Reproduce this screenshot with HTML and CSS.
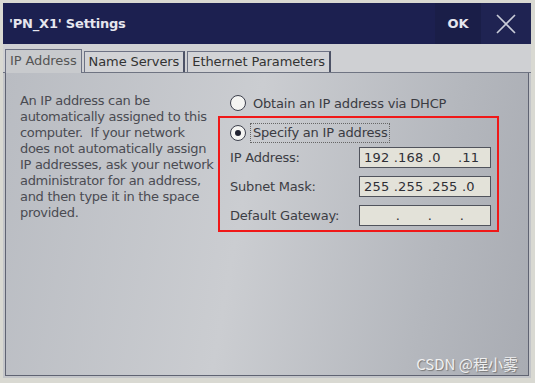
FILE: index.html
```html
<!DOCTYPE html>
<html lang="en">
  <head>
    <meta charset="UTF-8" />
    <title>'PN_X1' Settings</title>
    <link rel="stylesheet" href="styles.css">
  </head>
  <body>
    <div class="window">
      <div class="titlebar">
        <span class="title">'PN_X1' Settings</span>
        <span class="btn-ok">OK</span>
        <span class="btn-close">
          <svg width="22" height="22" viewBox="0 0 22 22">
            <path d="M2 2 L20 20 M20 2 L2 20" stroke="#c9ccd8" stroke-width="1.6" fill="none" />
          </svg>
        </span>
      </div>

      <div class="tabs">
        <div class="tab active">IP Address</div>
        <div class="tab">Name Servers</div>
        <div class="tab">Ethernet Parameters</div>
      </div>

      <div class="panel">
        <div class="content">
          <p class="desc">
            An IP address can be<br />
            automatically assigned to this<br />
            computer.&nbsp; If your network<br />
            does not automatically assign<br />
            IP addresses, ask your network<br />
            administrator for an address,<br />
            and then type it in the space<br />
            provided.
          </p>

          <div class="options">
            <div class="radio-row dhcp">
              <span class="radio"></span>
              <span>Obtain an IP address via DHCP</span>
            </div>

            <div class="highlight">
              <div class="radio-row">
                <span class="radio checked"></span>
                <span class="focus">Specify an IP address</span>
              </div>
              <div class="field">
                <span>IP Address:</span>
                <div class="ip-box">192 .168 .0 &nbsp;&nbsp;&nbsp;.11</div>
              </div>
              <div class="field">
                <span>Subnet Mask:</span>
                <div class="ip-box">255 .255 .255 .0</div>
              </div>
              <div class="field">
                <span>Default Gateway:</span>
                <div class="ip-box dots"><span>.</span><span>.</span><span>.</span></div>
              </div>
            </div>
          </div>
        </div>
        <div class="watermark">CSDN @程小雾</div>
      </div>
    </div>
  </body>
</html>
```

FILE: styles.css
```css
body {
  margin: 0;
  padding: 0;
  background-color: #d9d9d2;
  font-family: "DejaVu Sans", Verdana, sans-serif;
}
.window {
  margin: 3px 4px 5px 3px;
  height: 375px;
  display: flex;
  flex-direction: column;
  background-color: #c3c5c9;
}
.titlebar {
  height: 41px;
  display: flex;
  align-items: center;
  background-color: #1c2050;
  color: #e6e6ee;
}
.title {
  flex: 1;
  padding-left: 6px;
  font-size: 13px;
  font-weight: bold;
  letter-spacing: -0.2px;
}
.btn-ok {
  width: 46px;
  height: 41px;
  line-height: 41px;
  text-align: center;
  font-size: 13px;
  font-weight: bold;
  background-color: #1a1e48;
}
.btn-close {
  width: 50px;
  height: 41px;
  display: flex;
  align-items: center;
  justify-content: center;
  background-color: #1f2352;
}
.tabs {
  display: flex;
  align-items: flex-end;
  height: 28px;
  padding-left: 2px;
  border-bottom: 1px solid #6f7482;
  background-color: #cfd0d3;
}
.tab {
  height: 20px;
  line-height: 20px;
  padding: 0 4px;
  margin-right: 2px;
  font-size: 13px;
  color: #333;
  border: 1px solid #6d7284;
  border-bottom: none;
  border-right: 2px solid #4d5266;
  background-color: #d2d3d6;
  letter-spacing: -0.1px;
}
.tab.active {
  height: 23px;
  line-height: 21px;
  margin-bottom: -1px;
  border-right: 1px solid #6d7284;
  background-color: #c8cacd;
  color: #555;
}
.panel {
  flex: 1;
  position: relative;
  margin-left: 2px;
  margin-right: 2px;
  margin-bottom: 2px;
  border: 1px solid #5f6372;
  border-top: none;
  background: linear-gradient(100deg, #b9bcc2 0%, #cbcdd1 45%, #b4b7bd 80%, #a9acb3 100%);
}
.content {
  display: flex;
  padding: 20px 0 0 14px;
}
.desc {
  width: 198px;
  flex-shrink: 0;
  margin: 0;
  font-size: 13px;
  line-height: 16px;
  color: #4a4b52;
  letter-spacing: -0.3px;
  white-space: nowrap;
}
.options {
  width: 281px;
}
.radio-row {
  display: flex;
  align-items: center;
  height: 20px;
  font-size: 13px;
  color: #3a3b42;
  letter-spacing: -0.2px;
}
.dhcp {
  margin-left: 12px;
  margin-bottom: 3px;
}
.radio {
  width: 14px;
  height: 14px;
  margin-right: 7px;
  border: 1px solid #3c3f4c;
  border-radius: 50%;
  background-color: #f4f4f2;
  display: flex;
  align-items: center;
  justify-content: center;
}
.radio.checked::after {
  content: "";
  width: 6px;
  height: 6px;
  border-radius: 50%;
  background-color: #202230;
}
.highlight {
  width: 281px;
  padding: 5px 0 0 10px;
  border: 2px solid #f01818;
  box-sizing: border-box;
}
.highlight .radio {
  margin-right: 4px;
}
.focus {
  padding: 0 2px;
  border: 1px dotted #666;
  line-height: 18px;
}
.field {
  display: flex;
  align-items: center;
  justify-content: space-between;
  height: 29px;
  padding-right: 6px;
  font-size: 13px;
  color: #3c3d44;
  letter-spacing: -0.2px;
}
.ip-box {
  width: 132px;
  height: 21px;
  line-height: 20px;
  padding-left: 4px;
  box-sizing: border-box;
  border: 1px solid #50535c;
  background-color: #e3e2d9;
  font-size: 13px;
  color: #2e2f36;
  letter-spacing: 0.2px;
}
.ip-box.dots {
  display: flex;
  justify-content: space-around;
  padding: 0 12px 0 22px;
}
.watermark {
  position: absolute;
  right: 10px;
  bottom: 1px;
  font-family: "Noto Sans CJK SC", sans-serif;
  font-size: 15px;
  color: #f0f0f0;
  text-shadow: 1px 1px 1px #777;
}
```
